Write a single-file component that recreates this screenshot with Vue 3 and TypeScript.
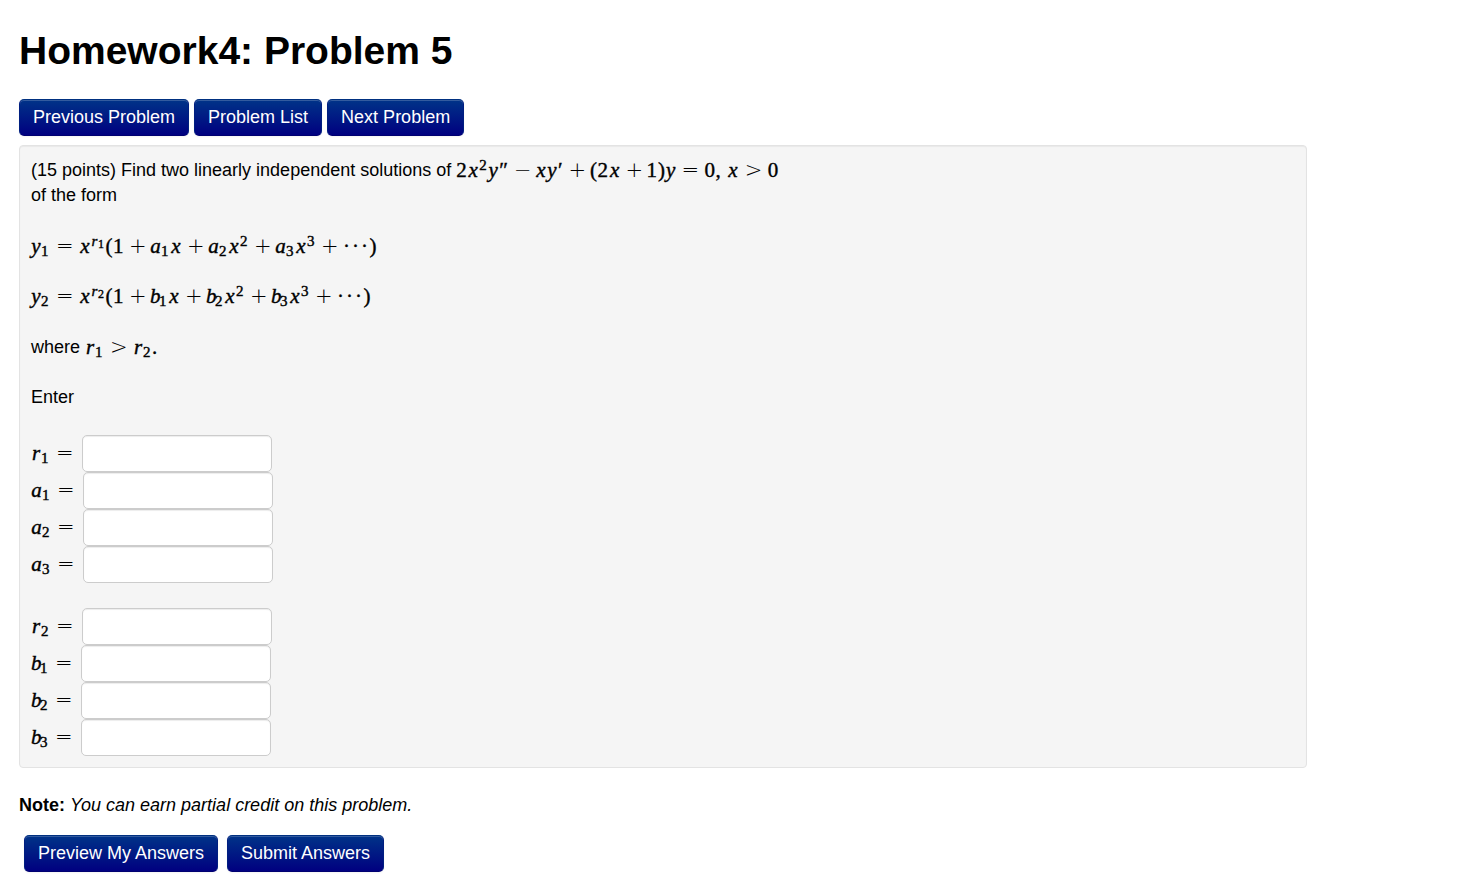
<script setup lang="ts">
import { h, ref, type FunctionalComponent, type VNode } from 'vue'

/*
 * Compact notation for formulas:
 *   letters are italic variables, digits are upright,
 *   _n is a subscript, ^n a superscript, ^{r_n} a nested one.
 */
const renderMath = (source: string): VNode[] => {
  const out: VNode[] = []
  let i = 0
  while (i < source.length) {
    const c = source[i]
    if (c === '_' || c === '^') {
      const tag = c === '_' ? 'sub' : 'sup'
      if (source[i + 1] === '{') {
        const end = source.indexOf('}', i)
        out.push(h(tag, { class: 'nested' }, renderMath(source.slice(i + 2, end))))
        i = end + 1
      } else {
        out.push(h(tag, source[i + 1]))
        i += 2
      }
      continue
    }
    if (/[a-z]/.test(c)) out.push(h('i', { class: ['var', 'var-' + c] }, c))
    else if (/[+−]/.test(c)) out.push(h('span', { class: 'op bin' }, c))
    else if (/[=>]/.test(c)) out.push(h('span', { class: 'op rel' }, c))
    else if (/[′″]/.test(c)) out.push(h('span', { class: 'prime' }, c))
    else if (c === '⋯') for (let n = 0; n < 3; n++) out.push(h('span', { class: 'dot' }, '·'))
    else if (c === ',') out.push(h('span', { class: 'comma' }, c))
    else if (/[()]/.test(c)) out.push(h('span', { class: 'paren' }, c))
    else if (c === '.') out.push(h('span', c))
    else out.push(h('span', { class: 'num' }, c))
    i++
  }
  return out
}

const MathText: FunctionalComponent<{ tex: string }> = (props) =>
  h('span', { class: 'math' }, renderMath(props.tex))
MathText.props = ['tex']

interface Field {
  id: string
  tex: string
}

const groups: Field[][] = [
  ['r_1', 'a_1', 'a_2', 'a_3'],
  ['r_2', 'b_1', 'b_2', 'b_3'],
].map((names) => names.map((n) => ({ id: n.replace('_', ''), tex: n + '=' })))

const answers = ref<Record<string, string>>({})
</script>

<template>
  <main class="page">
    <h1>Homework4: Problem 5</h1>
    <nav class="nav">
      <a class="btn" href="#previous">Previous Problem</a>
      <a class="btn" href="#list">Problem List</a>
      <a class="btn" href="#next">Next Problem</a>
    </nav>

    <form @submit.prevent>
      <section class="well">
        <p class="tall">
          (15 points) Find two linearly independent solutions of
          <MathText tex="2x^2y″−xy′+(2x+1)y=0,x>0" />
        </p>
        <p class="para">of the form</p>
        <p class="tall para"><MathText tex="y_1=x^{r_1}(1+a_1x+a_2x^2+a_3x^3+⋯)" /></p>
        <p class="para"><MathText tex="y_2=x^{r_2}(1+b_1x+b_2x^2+b_3x^3+⋯)" /></p>
        <p class="tall para">where <MathText tex="r_1>r_2." /></p>
        <p class="para">Enter</p>
        <div v-for="(group, g) in groups" :key="g" class="group">
          <div v-for="field in group" :key="field.id" class="row">
            <label :for="field.id"><MathText :tex="field.tex" /></label>
            <input :id="field.id" v-model="answers[field.id]" type="text" autocomplete="off" />
          </div>
        </div>
      </section>

      <p class="note"><b>Note:</b> <em>You can earn partial credit on this problem.</em></p>
      <div class="actions">
        <button class="btn" type="button">Preview My Answers</button>
        <button class="btn" type="submit">Submit Answers</button>
      </div>
    </form>
  </main>
</template>

<style>
body {
  margin: 0;
  background: #fff;
}

.math {
  font-family: 'Liberation Serif', serif;
  font-size: 21px;
  line-height: 0;
  vertical-align: -1px;
  white-space: nowrap;
  -webkit-text-stroke: 0.4px #000;
}
.math .var {
  display: inline-block;
  text-align: center;
}
.math .var-x { width: 12px; }
.math .var-y { width: 10px; }
.math .var-a { width: 11px; }
.math .var-b { width: 9px; }
.math .var-r { width: 10px; }
.math .op {
  display: inline-block;
  width: 17px;
  text-align: center;
  font-family: 'DejaVu Sans Light', 'DejaVu Sans', sans-serif;
  font-weight: 200;
  font-size: 21px;
  -webkit-text-stroke: 0;
}
.math .bin { width: 16px; margin: 0 5px; }
.math .rel { margin: 0 6px; }
.math .num {
  display: inline-block;
  width: 11px;
}
.math .paren {
  display: inline-block;
  width: 8px;
  text-align: center;
}
.math .comma { margin-right: 6px; }
.math .prime { margin: 0 1px; }
.math .dot {
  display: inline-block;
  width: 9px;
  text-align: center;
}
.math sub,
.math sup {
  display: inline-block;
  width: 9px;
  font-size: 15px;
  line-height: 0;
}
.math sub { vertical-align: -3px; }
.math sup { vertical-align: 7px; }
.math sup.nested { width: auto; }
.math sup .var-r { width: 7px; }
.math sup sub {
  width: 7px;
  font-size: 12px;
  vertical-align: -2px;
}
</style>

<style scoped>
.page {
  padding: 26px 153px 15px 19px;
  font: 18px/25px 'Liberation Sans', Arial, sans-serif;
  color: #000;
}
h1 {
  margin: 0 0 23px;
  font-size: 39px;
  line-height: 50px;
  font-weight: bold;
}
.nav {
  display: flex;
  gap: 5px;
  margin-bottom: 9px;
}
.btn {
  box-sizing: border-box;
  height: 37px;
  padding: 5px 13px;
  border: 1px solid #002b80;
  border-color: #003080 #001e80 #000070;
  border-radius: 5px;
  background: linear-gradient(#003388, #000080);
  box-shadow: inset 0 1px 0 rgba(255, 255, 255, 0.2), 0 1px 2px rgba(0, 0, 0, 0.05);
  color: #fff;
  font: 18px/25px 'Liberation Sans', Arial, sans-serif;
  text-decoration: none;
  white-space: nowrap;
  cursor: pointer;
}
.well {
  padding: 11px;
  border: 1px solid #e3e3e3;
  border-radius: 4px;
  background: #f5f5f5;
  box-shadow: inset 0 1px 1px rgba(0, 0, 0, 0.05);
}
p {
  margin: 0;
}
.para {
  margin-bottom: 25px;
}
.tall {
  line-height: 26px;
}
.group + .group {
  margin-top: 25px;
}
.row {
  display: flex;
  align-items: center;
  gap: 3px;
}
input {
  box-sizing: border-box;
  width: 190px;
  height: 37px;
  padding: 5px 8px;
  border: 1px solid #ccc;
  border-radius: 5px;
  background: #fff;
  box-shadow: inset 0 1px 1px rgba(0, 0, 0, 0.075);
  font: 18px/25px 'Liberation Sans', Arial, sans-serif;
}
.note {
  margin: 25px 0 17px;
}
.actions {
  display: flex;
  gap: 9px;
  padding-left: 5px;
}
</style>
